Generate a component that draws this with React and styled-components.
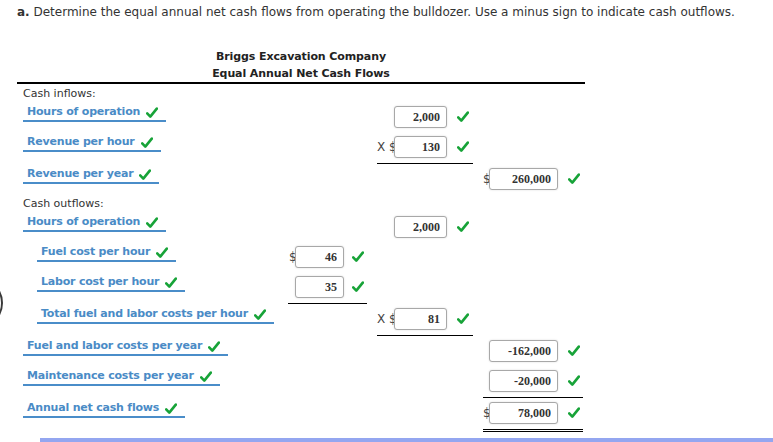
import React from 'react';
import styled, { createGlobalStyle } from 'styled-components';

const GlobalStyle = createGlobalStyle`
  html, body {
    margin: 0;
    padding: 0;
    background: #fff;
    overflow: hidden;
  }
  body {
    font-family: Verdana, "DejaVu Sans", sans-serif;
    color: #333;
  }
`;

const Page = styled.div`
  position: relative;
  width: 773px;
  height: 442px;
  padding: 4px 0 0 17px;
  box-sizing: border-box;
  overflow: hidden;
`;

// partly hidden round nav button at the left edge
const EdgeButton = styled.div`
  position: absolute;
  left: -49px;
  top: 277px;
  width: 48px;
  height: 48px;
  border: 2px solid #3a3a3a;
  border-radius: 50%;
`;

const Instruction = styled.p`
  margin: 0;
  font-size: 12px;
  line-height: 16px;
  color: #333;
  white-space: nowrap;

  b {
    font-weight: bold;
  }
`;

const Statement = styled.div`
  width: 568px;
  margin-top: 28px;
`;

const Heading = styled.div`
  border-bottom: 2px solid #000;
  text-align: center;
  font-size: 11px;
  font-weight: bold;
  line-height: 17px;
  letter-spacing: -0.1px;
  color: #222;
`;

const SectionLabel = styled.div`
  margin: 2px 0 0 6px;
  font-size: 11px;
  line-height: 16px;
  color: #333;
`;

const Row = styled.div`
  display: grid;
  grid-template-columns: 261px 79px 96px 100px;
  column-gap: 10px;
`;

const Label = styled.div`
  grid-column: 1;
  align-self: start;
  justify-self: start;
  margin: 2px 0 0 ${p => (p.$indent ? 20 : 6)}px;
  padding: 0 8px 0 4px;
  border-bottom: 2px solid #4a8dc9;
  font-size: 11px;
  font-weight: bold;
  line-height: 16px;
  letter-spacing: -0.2px;
  color: #4a8bc6;
  white-space: nowrap;

  svg {
    margin-left: 6px;
    vertical-align: -4px;
  }
`;

const Amount = styled.div`
  grid-column: ${p => p.$col + 1};
  display: flex;
  align-items: center;
  align-self: start;
  padding: 4px 0 ${p => (p.$rule ? 5 : 4)}px ${p => (p.$col === 1 ? 1 : 0)}px;
  border-bottom: ${p =>
    p.$rule === 'double' ? '3px double #000' : p.$rule ? '1px solid #000' : 'none'};
`;

const Prefix = styled.span`
  width: ${p => p.$w}px;
  flex: none;
  text-align: right;
  font-size: 12px;
  color: #444;
  white-space: nowrap;
`;

const Field = styled.input`
  width: ${p => p.$w}px;
  height: 22px;
  box-sizing: border-box;
  flex: none;
  margin: 0;
  padding: 0 6px 0 2px;
  border: 1px solid #a8a8a8;
  border-radius: 3px;
  box-shadow: 0 0 2px rgba(0, 0, 0, 0.15);
  background: #fff;
  text-align: right;
  font-family: "Liberation Serif", "Times New Roman", serif;
  font-size: 12px;
  font-weight: bold;
  color: #333;
  outline: none;
`;

const CheckWrap = styled.span`
  display: inline-flex;
  flex: none;
  margin-left: ${p => p.$gap}px;
`;

const BottomBar = styled.div`
  height: 10px;
  margin: 6px 0 0 23px;
  background: #94a6f0;
`;

const Check = () => (
  <svg width="12" height="12" viewBox="0 0 12 12">
    <path
      d="M1.2 6.4 L4.3 9.6 L10.8 1.6"
      fill="none"
      stroke="#17a338"
      strokeWidth="2.6"
      strokeLinecap="round"
      strokeLinejoin="round"
    />
  </svg>
);

// per column: prefix width, input width, gap before check
const columns = {
  1: { prefix: 6, input: 49, gap: 8 },
  2: { prefix: 17, input: 53, gap: 10 },
  3: { prefix: 6, input: 69, gap: 10 },
};

const rows = [
  { section: 'Cash inflows:' },
  { label: 'Hours of operation', col: 2, value: '2,000' },
  { label: 'Revenue per hour', col: 2, value: '130', prefix: 'X $', rule: 'single' },
  { label: 'Revenue per year', col: 3, value: '260,000', prefix: '$' },
  { section: 'Cash outflows:' },
  { label: 'Hours of operation', col: 2, value: '2,000' },
  { label: 'Fuel cost per hour', indent: true, col: 1, value: '46', prefix: '$' },
  { label: 'Labor cost per hour', indent: true, col: 1, value: '35', rule: 'single' },
  { label: 'Total fuel and labor costs per hour', indent: true, col: 2, value: '81', prefix: 'X $', rule: 'single' },
  { label: 'Fuel and labor costs per year', col: 3, value: '-162,000' },
  { label: 'Maintenance costs per year', col: 3, value: '-20,000', rule: 'single' },
  { label: 'Annual net cash flows', col: 3, value: '78,000', prefix: '$', rule: 'double' },
];

const App = () => {
  return (
    <Page>
      <GlobalStyle />
      <EdgeButton />
      <Instruction>
        <b>a.</b> Determine the equal annual net cash flows from operating the bulldozer. Use a minus sign to indicate cash outflows.
      </Instruction>

      <Statement>
        <Heading>
          Briggs Excavation Company
          <br />
          Equal Annual Net Cash Flows
        </Heading>

        {rows.map((r, i) => {
          if (r.section) {
            return <SectionLabel key={i}>{r.section}</SectionLabel>;
          }
          const c = columns[r.col];
          return (
            <Row key={i}>
              <Label $indent={r.indent}>
                {r.label}
                <Check />
              </Label>
              <Amount $col={r.col} $rule={r.rule}>
                <Prefix $w={c.prefix}>{r.prefix || ''}</Prefix>
                <Field $w={c.input} readOnly defaultValue={r.value} />
                <CheckWrap $gap={c.gap}>
                  <Check />
                </CheckWrap>
              </Amount>
            </Row>
          );
        })}
      </Statement>

      <BottomBar />
    </Page>
  );
};

export default App;
